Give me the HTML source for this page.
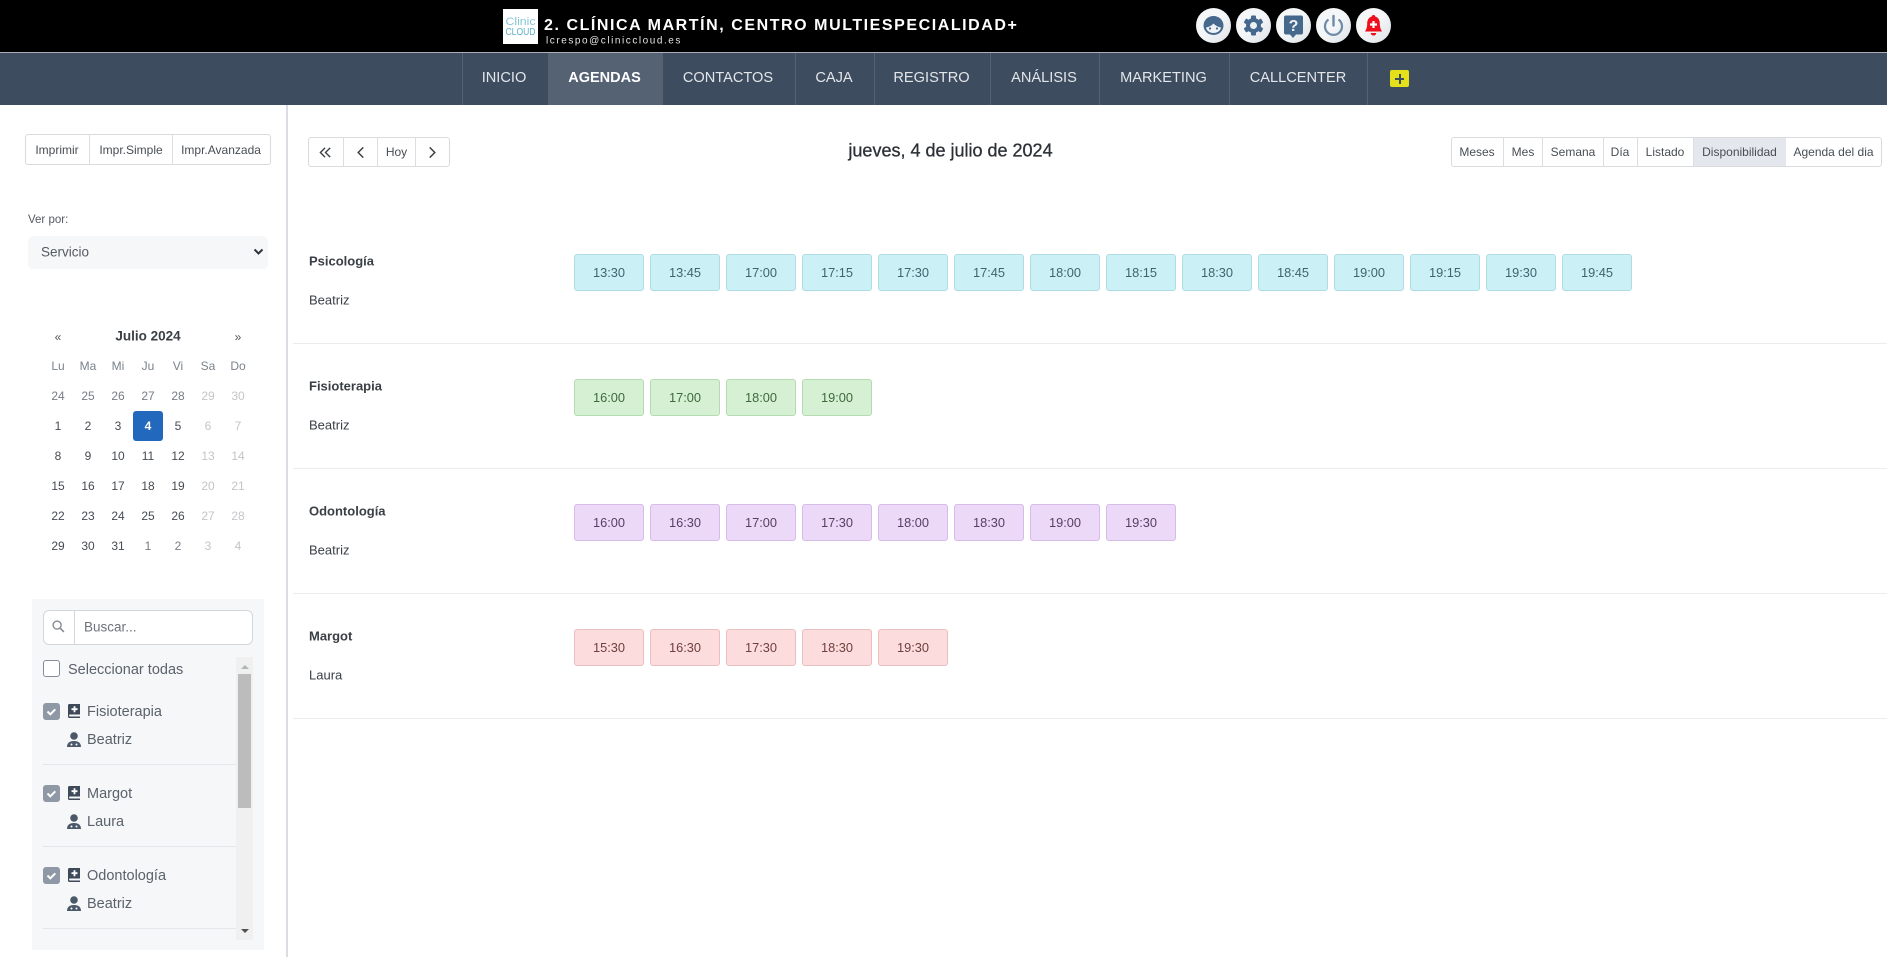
<!DOCTYPE html>
<html lang="es">
<head>
<meta charset="utf-8">
<title>Agendas</title>
<style>
html,body{margin:0;padding:0;background:#fff;}
body{width:1887px;height:957px;overflow:hidden;position:relative;font-family:"Liberation Sans",sans-serif;color:#343a40;}
.a{position:absolute;white-space:nowrap;}
.c{position:absolute;white-space:nowrap;transform:translate(-50%,-50%);}
.l{position:absolute;white-space:nowrap;transform:translateY(-50%);}
#top{position:absolute;left:0;top:0;width:1887px;height:52px;background:#000;}
#nav{position:absolute;left:0;top:52px;width:1887px;height:53px;background:#3d4c5e;border-top:1px solid #a9b0b8;box-sizing:border-box;}
.sep{position:absolute;top:53px;width:1px;height:52px;background:#56636f;}
.nt{position:absolute;top:78px;transform:translate(-50%,-50%);font-size:14.6px;color:#e3e6ea;white-space:nowrap;}
.ic{position:absolute;top:7.5px;width:35px;height:35px;border-radius:50%;background:linear-gradient(135deg,#f4f6f8 50%,#dde2e7 100%);}
.ic svg{position:absolute;left:0;top:0;width:35px;height:35px;}
.grp{position:absolute;border:1px solid #d9dbde;border-radius:3px;box-sizing:border-box;background:#fff;}
.d{position:absolute;top:137px;width:1px;height:29px;background:#dcdee1;}
.bt{font-size:12px;color:#484e54;}
.slot{position:absolute;width:70px;height:37px;box-sizing:border-box;border-radius:3px;border:1px solid;font-size:12.8px;text-align:center;line-height:35px;}
.b{background:#cbf0f5;border-color:#aedde4;color:#3c666e;}
.g{background:#d6f0d3;border-color:#b5dcb0;color:#3e6a3c;}
.p{background:#ecd9f7;border-color:#d6bce6;color:#553f63;}
.r{background:#fcdcdc;border-color:#e9bfbf;color:#703f3f;}
.hr{position:absolute;left:293px;width:1594px;height:1px;background:#ebecee;}
.sv{position:absolute;left:309px;font-size:13px;font-weight:bold;color:#3a3f45;transform:translateY(-50%);white-space:nowrap;}
.pr{position:absolute;left:309px;font-size:13px;color:#3a4046;transform:translateY(-50%);white-space:nowrap;}
.cal{font-size:12px;transform:translate(-50%,-50%);position:absolute;white-space:nowrap;color:#454b52;}
.h{color:#7a828c;}
.o{color:#777d84;}
.m{color:#c3c5c8;}
.chk{position:absolute;left:43px;width:17px;height:17px;box-sizing:border-box;border-radius:3px;background:#8f98a5;}
.chk svg{position:absolute;left:3px;top:3px;width:11px;height:11px;}
.it{position:absolute;left:87px;font-size:14.5px;color:#5a626c;transform:translateY(-50%);white-space:nowrap;}
.ii{position:absolute;left:68px;width:12px;height:14px;}
.ij{position:absolute;left:67px;width:14px;height:15px;}
.ln{position:absolute;left:43px;width:193px;height:1px;background:#e4e6e9;}
</style>
</head>
<body>
<div id="top"></div>
<div id="nav"></div>

<!-- logo -->
<svg class="a" style="left:503px;top:9px;" width="35" height="35" viewBox="0 0 35 35">
  <rect width="35" height="35" fill="#fff"/>
  <text x="2.500" y="16" font-size="11" fill="#86c6d6" font-family="Liberation Sans" textLength="30" lengthAdjust="spacingAndGlyphs">Clinic</text>
  <text x="2.500" y="26" font-size="10" fill="#5fafc3" font-family="Liberation Sans" textLength="30" lengthAdjust="spacingAndGlyphs">CLOUD</text>
</svg>
<div class="l" style="left:544px;top:26px;font-size:16px;font-weight:bold;color:#fff;letter-spacing:1.56px;">2. CLÍNICA MARTÍN, CENTRO MULTIESPECIALIDAD+</div>
<div class="l" style="left:546px;top:41px;font-size:10px;color:#e2e4e6;letter-spacing:1.55px;">lcrespo@cliniccloud.es</div>

<!-- top icons -->
<div class="ic" style="left:1195.5px;"><svg viewBox="0 0 35 35"><ellipse cx="17.500" cy="17.500" rx="10" ry="9.500" fill="#45688c"/><path d="M10 19.500c3-.5 5.500-1.800 7.500-4 2 2.200 4.500 3.500 7.500 4-.6 3.400-3.800 5.500-7.500 5.500S10.600 22.900 10 19.500z" fill="#f0f3f6"/><circle cx="14" cy="20.500" r="1.100" fill="#45688c"/><circle cx="21" cy="20.500" r="1.100" fill="#45688c"/></svg></div>
<div class="ic" style="left:1235.5px;"><svg viewBox="0 0 35 35"><g fill="#45688c"><circle cx="17.500" cy="17.500" r="7.500"/><rect x="15" y="7.500" width="5" height="20" rx="1"/><rect x="15" y="7.500" width="5" height="20" rx="1" transform="rotate(60 17.500 17.500)"/><rect x="15" y="7.500" width="5" height="20" rx="1" transform="rotate(120 17.500 17.500)"/></g><circle cx="17.500" cy="17.500" r="3.500" fill="#eef1f4"/></svg></div>
<div class="ic" style="left:1275.5px;"><svg viewBox="0 0 35 35"><path d="M10 7.500h15a2 2 0 0 1 2 2v15a2 2 0 0 1-2 2h-5l-3 3.500-3-3.500H10a2 2 0 0 1-2-2v-15a2 2 0 0 1 2-2z" fill="#45688c"/><text x="17.500" y="23" font-size="16" font-weight="bold" text-anchor="middle" fill="#eef1f4" font-family="Liberation Sans">?</text></svg></div>
<div class="ic" style="left:1315.5px;"><svg viewBox="0 0 35 35"><path d="M12.500 11.500a8.500 8.500 0 1 0 10 0" fill="none" stroke="#6d8aa6" stroke-width="2.200"/><path d="M17.500 8v9.500" stroke="#6d8aa6" stroke-width="2.400" stroke-linecap="round"/></svg></div>
<div class="ic" style="left:1355.5px;"><svg viewBox="0 0 35 35"><path d="M17.500 7c1.100 0 1.800.8 1.800 1.600 3.300.9 4.500 3.700 4.500 7 0 3.700 1 5.800 2.200 7.900H9c1.200-2.100 2.200-4.200 2.200-7.900 0-3.300 1.200-6.100 4.500-7 0-.8.700-1.600 1.800-1.600z" fill="#ee0e1c"/><path d="M14.800 25h5.400c0 1.500-1.200 2.500-2.700 2.500s-2.700-1-2.700-2.500z" fill="#ee0e1c"/><path d="M17.500 13v7M14 16.500h7" stroke="#fff" stroke-width="2.200"/></svg></div>

<!-- nav -->
<div class="a" style="left:548px;top:53px;width:115px;height:52px;background:#546274;"></div>
<div class="sep" style="left:462px;"></div><div class="sep" style="left:548px;"></div><div class="sep" style="left:662px;"></div><div class="sep" style="left:795px;"></div><div class="sep" style="left:874px;"></div><div class="sep" style="left:990px;"></div><div class="sep" style="left:1099px;"></div><div class="sep" style="left:1229px;"></div><div class="sep" style="left:1367px;"></div>
<div class="nt" style="left:504px;">INICIO</div>
<div class="nt" style="left:604.500px;color:#fff;font-weight:bold;font-size:14.500px;">AGENDAS</div>
<div class="nt" style="left:728px;">CONTACTOS</div>
<div class="nt" style="left:834px;">CAJA</div>
<div class="nt" style="left:931.500px;">REGISTRO</div>
<div class="nt" style="left:1044px;">ANÁLISIS</div>
<div class="nt" style="left:1163.500px;">MARKETING</div>
<div class="nt" style="left:1298px;">CALLCENTER</div>
<div class="a" style="left:1390px;top:70px;width:19px;height:17px;background:#e4e019;border-radius:2px;"></div>
<div class="a" style="left:1395px;top:78px;width:9px;height:2px;background:#3d4c5e;"></div>
<div class="a" style="left:1399px;top:74px;width:2px;height:10px;background:#3d4c5e;"></div>

<!-- sidebar line -->
<div class="a" style="left:286px;top:105px;width:1.500px;height:852px;background:#dadde3;"></div>

<!-- print group -->
<div class="grp" style="left:25px;top:134px;width:246px;height:31px;"></div>
<div class="d" style="left:89px;top:135px;"></div><div class="d" style="left:172px;top:135px;"></div>
<div class="c bt" style="left:57px;top:150px;">Imprimir</div>
<div class="c bt" style="left:131px;top:150px;">Impr.Simple</div>
<div class="c bt" style="left:221px;top:150px;">Impr.Avanzada</div>

<!-- Ver por -->
<div class="l" style="left:28px;top:220px;font-size:11.500px;color:#555b62;">Ver por:</div>
<div class="a" style="left:28px;top:236px;width:240px;height:33px;background:#f6f7f9;border-radius:5px;"></div>
<div class="l" style="left:41px;top:252px;font-size:13.500px;color:#535a62;">Servicio</div>
<svg class="a" style="left:253px;top:248px;" width="11" height="8" viewBox="0 0 11 8"><path d="M1.500 1.500l4 4 4-4" fill="none" stroke="#30353b" stroke-width="2"/></svg>

<!-- calendar -->
<div class="cal" style="left:58px;top:337px;color:#555;">«</div>
<div class="cal" style="left:148px;top:336px;font-size:13.500px;font-weight:bold;color:#3a4046;">Julio 2024</div>
<div class="cal" style="left:238px;top:337px;color:#555;">»</div>
<div class="cal h" style="left:58px;top:366px;">Lu</div><div class="cal h" style="left:88px;top:366px;">Ma</div><div class="cal h" style="left:118px;top:366px;">Mi</div><div class="cal h" style="left:148px;top:366px;">Ju</div><div class="cal h" style="left:178px;top:366px;">Vi</div><div class="cal h" style="left:208px;top:366px;">Sa</div><div class="cal h" style="left:238px;top:366px;">Do</div>
<div class="cal o" style="left:58px;top:396px;">24</div><div class="cal o" style="left:88px;top:396px;">25</div><div class="cal o" style="left:118px;top:396px;">26</div><div class="cal o" style="left:148px;top:396px;">27</div><div class="cal o" style="left:178px;top:396px;">28</div><div class="cal m" style="left:208px;top:396px;">29</div><div class="cal m" style="left:238px;top:396px;">30</div>
<div class="a" style="left:133px;top:411px;width:30px;height:30px;background:#2268bd;border-radius:3px;"></div>
<div class="cal" style="left:58px;top:426px;">1</div><div class="cal" style="left:88px;top:426px;">2</div><div class="cal" style="left:118px;top:426px;">3</div><div class="cal" style="left:148px;top:426px;color:#fff;font-weight:bold;">4</div><div class="cal" style="left:178px;top:426px;">5</div><div class="cal m" style="left:208px;top:426px;">6</div><div class="cal m" style="left:238px;top:426px;">7</div>
<div class="cal" style="left:58px;top:456px;">8</div><div class="cal" style="left:88px;top:456px;">9</div><div class="cal" style="left:118px;top:456px;">10</div><div class="cal" style="left:148px;top:456px;">11</div><div class="cal" style="left:178px;top:456px;">12</div><div class="cal m" style="left:208px;top:456px;">13</div><div class="cal m" style="left:238px;top:456px;">14</div>
<div class="cal" style="left:58px;top:486px;">15</div><div class="cal" style="left:88px;top:486px;">16</div><div class="cal" style="left:118px;top:486px;">17</div><div class="cal" style="left:148px;top:486px;">18</div><div class="cal" style="left:178px;top:486px;">19</div><div class="cal m" style="left:208px;top:486px;">20</div><div class="cal m" style="left:238px;top:486px;">21</div>
<div class="cal" style="left:58px;top:516px;">22</div><div class="cal" style="left:88px;top:516px;">23</div><div class="cal" style="left:118px;top:516px;">24</div><div class="cal" style="left:148px;top:516px;">25</div><div class="cal" style="left:178px;top:516px;">26</div><div class="cal m" style="left:208px;top:516px;">27</div><div class="cal m" style="left:238px;top:516px;">28</div>
<div class="cal" style="left:58px;top:546px;">29</div><div class="cal" style="left:88px;top:546px;">30</div><div class="cal" style="left:118px;top:546px;">31</div><div class="cal o" style="left:148px;top:546px;">1</div><div class="cal o" style="left:178px;top:546px;">2</div><div class="cal m" style="left:208px;top:546px;">3</div><div class="cal m" style="left:238px;top:546px;">4</div>

<!-- filter panel -->
<div class="a" style="left:32px;top:599px;width:232px;height:351px;background:#f6f7f9;"></div>
<div class="a" style="left:43px;top:610px;width:210px;height:35px;box-sizing:border-box;border:1px solid #d3d6db;border-radius:6px;background:#fff;"></div>
<div class="a" style="left:74px;top:611px;width:1px;height:33px;background:#d3d6db;"></div>
<svg class="a" style="left:52px;top:620px;" width="13" height="13" viewBox="0 0 14 14"><circle cx="5.500" cy="5.500" r="4.300" fill="none" stroke="#858b92" stroke-width="1.500"/><path d="M8.800 8.800l4 4" stroke="#858b92" stroke-width="1.700"/></svg>
<div class="l" style="left:84px;top:627px;font-size:13.500px;color:#6c737b;">Buscar...</div>

<div class="a" style="left:43px;top:660px;width:17px;height:17px;box-sizing:border-box;border:1.500px solid #868d97;border-radius:3px;background:#fff;"></div>
<div class="l" style="left:68px;top:670px;font-size:14.500px;color:#5a626c;">Seleccionar todas</div>

<div class="a" style="left:236px;top:657px;width:17px;height:283px;background:#f0f0f0;"></div>
<div class="a" style="left:238px;top:674px;width:13px;height:134px;background:#bcbcbc;"></div>
<div class="a" style="left:241px;top:665px;width:0;height:0;border-left:4px solid transparent;border-right:4px solid transparent;border-bottom:4px solid #b2b4b6;"></div>
<div class="a" style="left:241px;top:929px;width:0;height:0;border-left:4px solid transparent;border-right:4px solid transparent;border-top:4px solid #505050;"></div>

<div class="chk" style="top:703px;"><svg viewBox="0 0 11 11"><path d="M1.500 5.500l2.800 2.800 5-5" fill="none" stroke="#fff" stroke-width="2"/></svg></div>
<svg class="ii" style="top:704px;" viewBox="0 0 12 14"><path d="M1.500 0H12v10.500H2a1 1 0 0 0 0 2h10V14H1.500A1.500 1.500 0 0 1 0 12.500v-11A1.500 1.500 0 0 1 1.500 0z" fill="#3e4a58"/><path d="M6.500 2.200v6M3.500 5.200h6" stroke="#fff" stroke-width="1.800"/></svg>
<div class="it" style="top:712px;">Fisioterapia</div>
<svg class="ij" style="top:732px;" viewBox="0 0 14 15"><circle cx="7" cy="4" r="3.800" fill="#4a5868"/><path d="M0 15c0-4 2.500-6 7-6s7 2 7 6z" fill="#4a5868"/><circle cx="4.500" cy="12.500" r="1" fill="#fff"/><circle cx="9.500" cy="12.500" r="1" fill="#fff"/></svg>
<div class="it" style="top:740px;">Beatriz</div>
<div class="ln" style="top:764px;"></div>

<div class="chk" style="top:785px;"><svg viewBox="0 0 11 11"><path d="M1.500 5.500l2.800 2.800 5-5" fill="none" stroke="#fff" stroke-width="2"/></svg></div>
<svg class="ii" style="top:786px;" viewBox="0 0 12 14"><path d="M1.500 0H12v10.500H2a1 1 0 0 0 0 2h10V14H1.500A1.500 1.500 0 0 1 0 12.500v-11A1.500 1.500 0 0 1 1.500 0z" fill="#3e4a58"/><path d="M6.500 2.200v6M3.500 5.200h6" stroke="#fff" stroke-width="1.800"/></svg>
<div class="it" style="top:794px;">Margot</div>
<svg class="ij" style="top:814px;" viewBox="0 0 14 15"><circle cx="7" cy="4" r="3.800" fill="#4a5868"/><path d="M0 15c0-4 2.500-6 7-6s7 2 7 6z" fill="#4a5868"/><circle cx="4.500" cy="12.500" r="1" fill="#fff"/><circle cx="9.500" cy="12.500" r="1" fill="#fff"/></svg>
<div class="it" style="top:822px;">Laura</div>
<div class="ln" style="top:846px;"></div>

<div class="chk" style="top:867px;"><svg viewBox="0 0 11 11"><path d="M1.500 5.500l2.800 2.800 5-5" fill="none" stroke="#fff" stroke-width="2"/></svg></div>
<svg class="ii" style="top:868px;" viewBox="0 0 12 14"><path d="M1.500 0H12v10.500H2a1 1 0 0 0 0 2h10V14H1.500A1.500 1.500 0 0 1 0 12.500v-11A1.500 1.500 0 0 1 1.500 0z" fill="#3e4a58"/><path d="M6.500 2.200v6M3.500 5.200h6" stroke="#fff" stroke-width="1.800"/></svg>
<div class="it" style="top:876px;">Odontología</div>
<svg class="ij" style="top:896px;" viewBox="0 0 14 15"><circle cx="7" cy="4" r="3.800" fill="#4a5868"/><path d="M0 15c0-4 2.500-6 7-6s7 2 7 6z" fill="#4a5868"/><circle cx="4.500" cy="12.500" r="1" fill="#fff"/><circle cx="9.500" cy="12.500" r="1" fill="#fff"/></svg>
<div class="it" style="top:904px;">Beatriz</div>
<div class="ln" style="top:928px;"></div>

<!-- calendar nav -->
<div class="grp" style="left:308px;top:137px;width:142px;height:30px;"></div>
<div class="d" style="left:343px;"></div><div class="d" style="left:377px;"></div><div class="d" style="left:415px;"></div>
<svg class="a" style="left:319px;top:146px;" width="13" height="13" viewBox="0 0 14 14"><path d="M6.500 2L1.500 7l5 5M12 2L7 7l5 5" fill="none" stroke="#3a4046" stroke-width="1.500"/></svg>
<svg class="a" style="left:354px;top:146px;" width="13" height="13" viewBox="0 0 14 14"><path d="M10 1.500L4.500 7l5.500 5.500" fill="none" stroke="#3a4046" stroke-width="1.600"/></svg>
<div class="c bt" style="left:396.500px;top:152px;">Hoy</div>
<svg class="a" style="left:426px;top:146px;" width="13" height="13" viewBox="0 0 14 14"><path d="M4 1.500L9.500 7 4 12.500" fill="none" stroke="#3a4046" stroke-width="1.600"/></svg>

<div class="c" style="left:950.500px;top:151px;font-size:18px;color:#2b3036;-webkit-text-stroke:.3px #2b3036;">jueves, 4 de julio de 2024</div>

<!-- view group -->
<div class="grp" style="left:1451px;top:137px;width:431px;height:30px;"></div>
<div class="a" style="left:1693px;top:138px;width:93px;height:28px;background:#e4e7ee;"></div>
<div class="d" style="left:1503px;"></div><div class="d" style="left:1542px;"></div><div class="d" style="left:1603px;"></div><div class="d" style="left:1637px;"></div><div class="d" style="left:1693px;"></div>
<div class="c bt" style="left:1477px;top:152px;">Meses</div>
<div class="c bt" style="left:1523px;top:152px;">Mes</div>
<div class="c bt" style="left:1573px;top:152px;">Semana</div>
<div class="c bt" style="left:1620px;top:152px;">Día</div>
<div class="c bt" style="left:1665px;top:152px;">Listado</div>
<div class="c bt" style="left:1739.500px;top:152px;">Disponibilidad</div>
<div class="c bt" style="left:1833.500px;top:152px;">Agenda del dia</div>

<!-- Psicologia -->
<div class="sv" style="top:261px;">Psicología</div>
<div class="pr" style="top:300px;">Beatriz</div>
<div class="slot b" style="left:574px;top:254px;">13:30</div><div class="slot b" style="left:650px;top:254px;">13:45</div><div class="slot b" style="left:726px;top:254px;">17:00</div><div class="slot b" style="left:802px;top:254px;">17:15</div><div class="slot b" style="left:878px;top:254px;">17:30</div><div class="slot b" style="left:954px;top:254px;">17:45</div><div class="slot b" style="left:1030px;top:254px;">18:00</div><div class="slot b" style="left:1106px;top:254px;">18:15</div><div class="slot b" style="left:1182px;top:254px;">18:30</div><div class="slot b" style="left:1258px;top:254px;">18:45</div><div class="slot b" style="left:1334px;top:254px;">19:00</div><div class="slot b" style="left:1410px;top:254px;">19:15</div><div class="slot b" style="left:1486px;top:254px;">19:30</div><div class="slot b" style="left:1562px;top:254px;">19:45</div>
<div class="hr" style="top:343px;"></div>

<!-- Fisioterapia -->
<div class="sv" style="top:386px;">Fisioterapia</div>
<div class="pr" style="top:425px;">Beatriz</div>
<div class="slot g" style="left:574px;top:379px;">16:00</div><div class="slot g" style="left:650px;top:379px;">17:00</div><div class="slot g" style="left:726px;top:379px;">18:00</div><div class="slot g" style="left:802px;top:379px;">19:00</div>
<div class="hr" style="top:468px;"></div>

<!-- Odontologia -->
<div class="sv" style="top:511px;">Odontología</div>
<div class="pr" style="top:550px;">Beatriz</div>
<div class="slot p" style="left:574px;top:504px;">16:00</div><div class="slot p" style="left:650px;top:504px;">16:30</div><div class="slot p" style="left:726px;top:504px;">17:00</div><div class="slot p" style="left:802px;top:504px;">17:30</div><div class="slot p" style="left:878px;top:504px;">18:00</div><div class="slot p" style="left:954px;top:504px;">18:30</div><div class="slot p" style="left:1030px;top:504px;">19:00</div><div class="slot p" style="left:1106px;top:504px;">19:30</div>
<div class="hr" style="top:593px;"></div>

<!-- Margot -->
<div class="sv" style="top:636px;">Margot</div>
<div class="pr" style="top:675px;">Laura</div>
<div class="slot r" style="left:574px;top:629px;">15:30</div><div class="slot r" style="left:650px;top:629px;">16:30</div><div class="slot r" style="left:726px;top:629px;">17:30</div><div class="slot r" style="left:802px;top:629px;">18:30</div><div class="slot r" style="left:878px;top:629px;">19:30</div>
<div class="hr" style="top:718px;"></div>
</body>
</html>
